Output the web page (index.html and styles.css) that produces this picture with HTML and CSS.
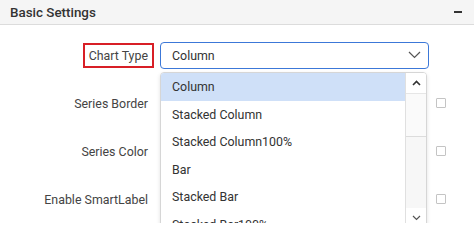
FILE: index.html
```html
<!DOCTYPE html>
<html lang="en">
<head>
    <meta charset="UTF-8">
    <title>Basic Settings</title>
    <link rel="stylesheet" href="styles.css">
</head>
<body>
    <div class="panel">
        <div class="panel-header">
            <span class="panel-title">Basic Settings</span>
            <span class="collapse-icon"></span>
        </div>

        <div class="panel-body">
            <div class="row">
                <div class="label-cell"><span class="label highlight">Chart Type</span></div>
                <div class="select">
                    <span>Column</span>
                    <svg class="chevron" width="13" height="8" viewBox="0 0 13 8">
                        <path d="M1 1 L6.5 6.5 L12 1" fill="none" stroke="#555" stroke-width="1.2"/>
                    </svg>
                </div>
                <div class="check-cell"></div>
            </div>
            <div class="row">
                <div class="label-cell"><span class="label">Series Border</span></div>
                <div class="control"></div>
                <div class="check-cell"><span class="checkbox"></span></div>
            </div>
            <div class="row">
                <div class="label-cell"><span class="label">Series Color</span></div>
                <div class="control"></div>
                <div class="check-cell"><span class="checkbox"></span></div>
            </div>
            <div class="row">
                <div class="label-cell"><span class="label">Enable SmartLabel</span></div>
                <div class="control"></div>
                <div class="check-cell"><span class="checkbox"></span></div>
            </div>

            <!-- open dropdown of the chart type select -->
            <div class="popup">
                <ul class="options">
                    <li class="active">Column</li>
                    <li>Stacked Column</li>
                    <li>Stacked Column100%</li>
                    <li>Bar</li>
                    <li>Stacked Bar</li>
                    <li>Stacked Bar100%</li>
                </ul>
                <div class="scrollbar">
                    <div class="scroll-btn">
                        <svg width="9" height="6" viewBox="0 0 9 6"><path d="M1 5 L4.5 1.5 L8 5" fill="none" stroke="#333" stroke-width="1.6"/></svg>
                    </div>
                    <div class="scroll-thumb"></div>
                    <div class="scroll-track"></div>
                    <div class="scroll-btn">
                        <svg width="9" height="6" viewBox="0 0 9 6"><path d="M1 1 L4.5 4.5 L8 1" fill="none" stroke="#555" stroke-width="1.2"/></svg>
                    </div>
                </div>
            </div>
        </div>
    </div>
</body>
</html>
```

FILE: styles.css
```css
body {
    margin: 0;
    padding: 0;
    background-color: #fff;
    font-family: Roboto, "Liberation Sans", Arial, sans-serif;
    color: #333;
    overflow: hidden;
}

.panel-header {
    height: 24px;
    background-color: #f5f5f5;
    border-bottom: 1px solid #dcdcdc;
    display: flex;
    align-items: center;
    justify-content: space-between;
    padding: 0 12px 0 10px;
}

.panel-title {
    font-size: 13.4px;
    font-weight: 500;
    color: #333;
}

.collapse-icon {
    width: 8px;
    height: 2px;
    background-color: #333;
}

.panel-body {
    position: relative;
    padding-top: 6px;
}

.row {
    display: flex;
    align-items: center;
    height: 48px;
}

.label-cell {
    width: 154px;
    text-align: right;
}

.label {
    display: inline-block;
    font-size: 12.4px;
    color: #444;
    padding: 3px 4px 3px 4px;
    border: 2px solid transparent;
}

.label.highlight {
    border-color: #d81f26;
}

.select,
.control {
    width: 265px;
    height: 25px;
    margin-left: 6px;
}

.select {
    border: 1px solid #3c78d8;
    border-radius: 4px;
    display: flex;
    align-items: center;
    justify-content: space-between;
    padding: 0 7px 0 11px;
    box-sizing: content-box;
    width: 249px;
    font-size: 12.4px;
    color: #333;
}

.chevron {
    display: block;
}

.check-cell {
    width: 30px;
    padding-left: 11px;
}

.checkbox {
    display: block;
    width: 8px;
    height: 8px;
    border: 1px solid #c4c4c4;
    border-radius: 1px;
    background-color: #fff;
}

.popup {
    position: absolute;
    left: 160px;
    top: 47px;
    width: 265px;
    height: 155px;
    border: 1px solid #d6d6d6;
    border-radius: 4px;
    background-color: #fff;
    box-shadow: 0 2px 4px rgba(0, 0, 0, 0.12);
    display: flex;
    overflow: hidden;
}

.options {
    list-style: none;
    margin: 0;
    padding: 0;
    flex: 1;
}

.options li {
    height: 27.6px;
    line-height: 27.6px;
    padding-left: 11px;
    font-size: 12.4px;
    color: #333;
    white-space: nowrap;
}

.options li.active {
    background-color: #cfe0f8;
}

.scrollbar {
    width: 20px;
    border-left: 1px solid #e0e0e0;
    background-color: #f6f6f6;
    display: flex;
    flex-direction: column;
}

.scroll-btn {
    height: 20px;
    display: flex;
    align-items: center;
    justify-content: center;
    background-color: #fff;
}

.scroll-thumb {
    height: 42px;
    background-color: #fafafa;
    border-top: 1px solid #e6e6e6;
    border-bottom: 1px solid #dcdcdc;
}

.scroll-track {
    flex: 1;
    background-color: #f7f7f7;
}
```
